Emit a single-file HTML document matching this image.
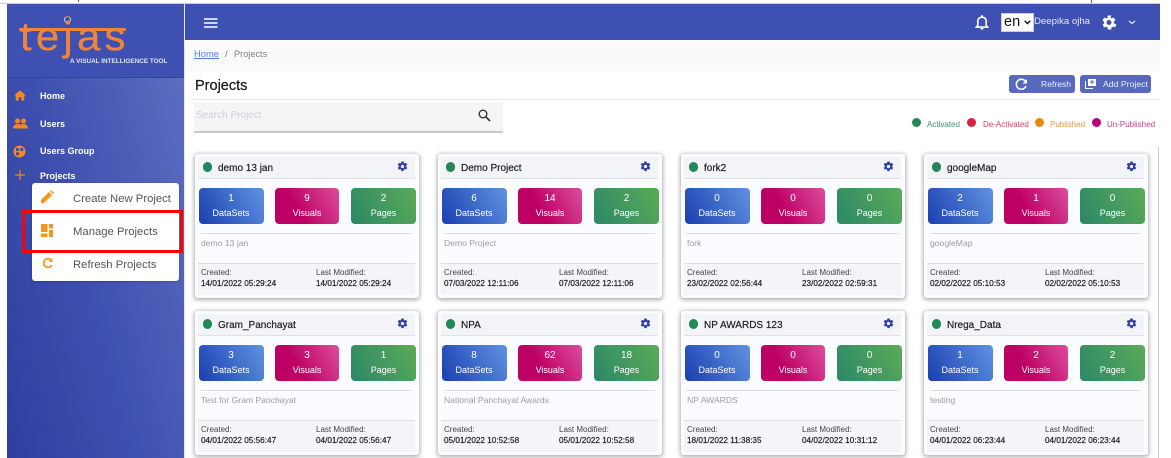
<!DOCTYPE html>
<html><head><meta charset="utf-8">
<style>
html,body{margin:0;padding:0;background:#fff;}
body{width:1171px;height:458px;position:relative;overflow:hidden;font-family:"Liberation Sans",sans-serif;filter:blur(.3px);}
div,span,a,svg{position:absolute;white-space:nowrap;}
.card{width:224px;height:144px;background:#fbfcff;border-radius:3px;box-shadow:0 1px 4px 1px rgba(0,0,0,.32);}
.hd{left:3px;top:3px;width:217px;height:21px;background:#f3f4f8;border-bottom:1px solid #dfe1e6;}
.dot{left:7.5px;top:8px;width:9.5px;height:9.5px;border-radius:50%;background:#23875a;}
.ttl{left:23px;top:8.7px;font-size:10px;line-height:12px;color:#222;-webkit-text-stroke:.2px #222;}
.gear{left:202px;top:7px;width:11px;height:11px;}
.t{top:34px;width:65px;height:36px;border-radius:4px;color:#fff;text-align:center;}
.t b{position:absolute;left:0;right:0;top:5px;font-weight:400;font-size:10px;line-height:12px;}
.t i{position:absolute;left:0;right:0;top:20px;font-style:normal;font-size:9px;line-height:11px;}
.t1{left:3.5px;background:linear-gradient(60deg,#1a3fb0,#6093e0);}
.t2{left:80px;width:64px;background:linear-gradient(60deg,#bd0064 35%,#dc4e9b);}
.t3{left:156px;background:linear-gradient(60deg,#2b8768,#5bab57);}
.ln{left:6px;top:79px;width:211px;height:1px;background:#dcdee3;}
.ds{left:6px;top:83.5px;font-size:8.6px;line-height:11px;color:#9a9da3;}
.ft{left:3px;top:109px;width:217px;height:31px;background:#f3f5f9;border-top:1px solid #dcdee3;}
.l{font-size:8px;line-height:10px;color:#444;top:4px;}
.v{font-size:8.2px;line-height:10px;color:#222;top:15px;-webkit-text-stroke:.2px #222;}
.a{left:3px}.b{left:118px}
.nav{left:40px;font-size:9px;line-height:11px;color:#fff;font-weight:bold;}
.mi{left:73px;font-size:11.3px;line-height:14px;color:#555;}
.lg{font-size:8px;line-height:10px;top:120px;}
.ld{width:9px;height:9px;border-radius:50%;top:118px;}
</style></head>
<body>
<div style="left:0;top:0;width:1160px;height:3px;background:#fff;border-bottom:1px solid #ccc;"></div>
<div style="left:78px;top:0;width:1px;height:2px;background:#666"></div>
<div style="left:1091px;top:0;width:1px;height:3px;background:#666"></div>

<!-- sidebar -->
<div style="left:7px;top:4px;width:177px;height:454px;background:linear-gradient(75deg,#2f3e9e 0%,#3f51b0 45%,#6170c2 100%);"></div>
<div style="left:7px;top:4px;width:177px;height:73px;background:#3e50b1;border-bottom:1px solid #34439b;"></div>
<div style="left:184px;top:4px;width:1px;height:454px;background:#e8e8e8"></div>

<!-- logo -->
<div style="left:19px;top:28px;width:107px;height:3px;background:#f0853a;border-radius:2px"></div>
<div style="left:64px;top:16px;width:5px;height:5px;border:1.5px solid #c9cfe6;border-top-color:#f0853a;border-radius:50%"></div>
<div style="left:20px;top:12px;font-size:40px;line-height:50px;letter-spacing:4px;color:#f0853a;-webkit-text-stroke:.3px #f0853a;transform:scaleX(1.05);transform-origin:left top;">tejas</div>
<div style="left:70px;top:56.5px;font-size:6.4px;line-height:9px;font-weight:bold;color:#dfe3f3;">A VISUAL INTELLIGENCE TOOL</div>

<!-- nav -->
<svg style="left:14px;top:90px" width="12" height="11" viewBox="0 0 14 12"><path d="M7 0L0 6h2v6h3.500V8h3v4H12V6h2z" fill="#f5891f"/></svg>
<div class="nav" style="top:91px">Home</div>
<svg style="left:13px;top:118px" width="15" height="11" viewBox="0 0 15 11"><circle cx="4.500" cy="3" r="2.500" fill="#f5891f"/><circle cx="10.500" cy="3" r="2.500" fill="#f5891f"/><path d="M0 10.500C0 7 3 6 4.500 6S7.500 6.500 7.500 7C8 6.500 9 6 10.500 6 12 6 15 7 15 10.500z" fill="#f5891f"/></svg>
<div class="nav" style="top:119px">Users</div>
<svg style="left:13px;top:145px" width="13" height="13" viewBox="0 0 13 13"><circle cx="6.500" cy="6.500" r="6" fill="#f5891f"/><rect x="3" y="3" width="2.800" height="2.800" fill="#3e4fa8"/><rect x="7.300" y="3" width="2.800" height="3" fill="#3e4fa8"/><rect x="3" y="7.300" width="3" height="3" fill="#3e4fa8"/></svg>
<div class="nav" style="top:146px">Users Group</div>
<svg style="left:15px;top:170px" width="10" height="10" viewBox="0 0 10 10"><path d="M5 0v10M0 5h10" stroke="#f5891f" stroke-width="1.200"/></svg>
<div class="nav" style="top:171px">Projects</div>

<!-- flyout -->
<div style="left:32px;top:183px;width:147px;height:98px;background:#fff;border-radius:3px;box-shadow:0 1px 2px rgba(0,0,0,.2)"></div>
<svg style="left:41px;top:190px" width="13" height="13" viewBox="0 0 13 13"><path d="M0 13V10L8 2l3 3-8 8zM9 1l1-1 3 3-1 1.200z" fill="#f5941f"/></svg>
<div class="mi" style="top:192px">Create New Project</div>
<svg style="left:41px;top:224px" width="12" height="13" viewBox="0 0 12 13"><path d="M0 0h6.500v8H0zM8 0h4v4.500H8zM8 6h4v7H8zM0 9.500h6.500V13H0z" fill="#f5941f"/></svg>
<div class="mi" style="top:225px">Manage Projects</div>
<svg style="left:42px;top:257px" width="11" height="12" viewBox="0 0 11 12"><path d="M9.500 3.500A4.300 4.300 0 1 0 9.800 8" fill="none" stroke="#f5941f" stroke-width="1.700"/><path d="M10.500 1v4h-4z" fill="#f5941f"/></svg>
<div class="mi" style="top:258px">Refresh Projects</div>
<div style="left:22px;top:210px;width:155px;height:37px;border:3px solid #f00"></div>

<!-- topbar -->
<div style="left:185px;top:4px;width:975px;height:36px;background:#3e50b1;"></div>
<svg style="left:204px;top:18px" width="14" height="10" viewBox="0 0 14 10"><path d="M0 1h13.500M0 5h13.500M0 9h13.500" stroke="#fff" stroke-width="1.400"/></svg>
<svg style="left:975px;top:14px" width="14" height="17" viewBox="0 0 12 15"><path d="M1 11.500h10L9.700 10V6.500C9.700 4 8.200 2.800 6 2.800S2.300 4 2.300 6.500V10zM4.800 13h2.400" fill="none" stroke="#fff" stroke-width="1.400"/><path d="M6 1v2" stroke="#fff" stroke-width="1.400"/></svg>
<div style="left:1001px;top:13px;width:33px;height:19px;background:#fff;border:.5px solid #ccc;box-sizing:border-box;"></div>
<div style="left:1004px;top:13px;font-size:14.5px;line-height:19px;color:#111;">en</div>
<svg style="left:1024px;top:20px" width="7" height="5" viewBox="0 0 7 5"><path d="M.7.7L3.500 3.500 6.300.7" fill="none" stroke="#111" stroke-width="1.400"/></svg>
<div style="left:1034px;top:16px;font-size:9.6px;line-height:12px;color:#e8eaf6;">Deepika ojha</div>
<svg style="left:1100px;top:14px" width="17" height="17" viewBox="0 0 24 24"><path fill="#fff" d="M19.400 13c0-.3.100-.6.100-1s0-.7-.1-1l2.100-1.600c.2-.2.200-.4.100-.6l-2-3.500c-.1-.2-.4-.3-.6-.2l-2.500 1c-.5-.4-1.100-.7-1.700-1L15.900 2.500c0-.2-.2-.4-.5-.4h-4c-.2 0-.5.200-.5.400l-.4 2.600c-.6.300-1.200.6-1.700 1l-2.500-1c-.2-.1-.5 0-.6.200l-2 3.500c-.1.200-.1.400.1.600L5.900 11c0 .3-.1.600-.1 1s0 .7.1 1l-2.100 1.600c-.2.200-.2.400-.1.600l2 3.500c.1.200.4.300.6.200l2.500-1c.5.400 1.100.7 1.700 1l.4 2.600c0 .2.200.4.500.4h4c.2 0 .5-.2.500-.4l.4-2.600c.6-.3 1.200-.6 1.700-1l2.500 1c.2.100.5 0 .6-.2l2-3.500c.1-.2.100-.4-.1-.6zM12.700 15.500a3.500 3.500 0 1 1 0-7 3.500 3.500 0 0 1 0 7z"/></svg>
<svg style="left:1128px;top:20px" width="8" height="5" viewBox="0 0 8 5"><path d="M1 1l3 2.500L7 1" fill="none" stroke="#e8eaf6" stroke-width="1.200"/></svg>

<!-- breadcrumb -->
<div style="left:185px;top:41px;width:975px;height:30px;background:#fafafa;"></div>
<a style="left:194px;top:48px;font-size:9.4px;line-height:12px;color:#5a78ee;text-decoration:underline;">Home</a>
<div style="left:225px;top:48px;font-size:9.4px;line-height:12px;color:#777;">/</div>
<div style="left:234px;top:48px;font-size:9.2px;line-height:12px;color:#80838c;">Projects</div>

<!-- title row -->
<div style="left:195px;top:77px;font-size:14.500px;line-height:18px;color:#1b1b1b;-webkit-text-stroke:.25px #1b1b1b;">Projects</div>
<div style="left:190px;top:99px;width:970px;height:1px;background:#e3e3e3"></div>
<div style="left:1009px;top:75px;width:66px;height:18px;background:#5669bf;border-radius:3px;"></div>
<svg style="left:1015px;top:78px" width="13" height="12" viewBox="0 0 13 12"><path d="M10.500 3.500A5 5 0 1 0 11 8" fill="none" stroke="#fff" stroke-width="1.500"/><path d="M12 1v4.500H7.500z" fill="#fff"/></svg>
<div style="left:1041px;top:79px;font-size:8.600px;line-height:11px;color:#eef0fa;">Refresh</div>
<div style="left:1080px;top:75px;width:71px;height:18px;background:#5669bf;border-radius:3px;"></div>
<svg style="left:1085px;top:78px" width="11" height="11" viewBox="0 0 11 11"><path d="M3 1h8v7H3zM6.500 2v1.500H5v1h1.500v1.700h1V4.500h1.800v-1H7.500V2zM0 3h1v7h7v1H0z" fill="#fff" fill-rule="evenodd"/></svg>
<div style="left:1103px;top:79px;font-size:8.700px;line-height:11px;color:#eef0fa;">Add Project</div>

<!-- search -->
<div style="left:194px;top:102px;width:309px;height:31px;background:#f5f5f5;border-bottom:2px solid #c8c8c8;box-sizing:border-box;border-radius:2px 2px 0 0"></div>
<div style="left:196px;top:109px;font-size:10px;line-height:13px;color:#ccd0e4;">Search Project</div>
<svg style="left:478px;top:109px" width="13" height="13" viewBox="0 0 13 13"><circle cx="5" cy="5" r="3.800" fill="none" stroke="#333" stroke-width="1.400"/><path d="M8 8l4 4" stroke="#333" stroke-width="1.600"/></svg>

<!-- legend -->
<div class="ld" style="left:912px;background:#23875a"></div><div class="lg" style="left:927px;color:#3f9272">Activated</div>
<div class="ld" style="left:967px;background:#dc1f45"></div><div class="lg" style="left:983px;color:#e0415f">De-Activated</div>
<div class="ld" style="left:1035px;background:#e8890f"></div><div class="lg" style="left:1050px;color:#ea9c3c">Published</div>
<div class="ld" style="left:1092px;background:#bd007c"></div><div class="lg" style="left:1107px;color:#c93a8e">Un-Published</div>

<div style="left:1158px;top:147px;width:1px;height:311px;background:#ccc"></div>

<!-- cards -->
<div class="card" style="left:195px;top:154px"><div class="hd"></div><div class="dot"></div><div class="ttl">demo 13 jan</div><svg class="gear" viewBox="0 0 24 24"><path fill="#3340a8" fill-rule="evenodd" d="M9.500 1h5l.6 3.200 1.800 1 3-1.100 2.500 4.300-2.500 2.100v2l2.500 2.100-2.500 4.300-3-1.100-1.800 1-.6 3.200h-5l-.6-3.200-1.800-1-3 1.100-2.500-4.300 2.500-2.100v-2L1.600 8.400l2.500-4.300 3 1.100 1.800-1zM12 8.500a3.500 3.500 0 1 0 0 7 3.500 3.500 0 0 0 0-7z"/></svg><div class="t t1"><b>1</b><i>DataSets</i></div><div class="t t2"><b>9</b><i>Visuals</i></div><div class="t t3"><b>2</b><i>Pages</i></div><div class="ln"></div><div class="ds">demo 13 jan</div><div class="ft"><div class="l a">Created:</div><div class="l b">Last Modified:</div><div class="v a">14/01/2022 05:29:24</div><div class="v b">14/01/2022 05:29:24</div></div></div>

<div class="card" style="left:438px;top:154px"><div class="hd"></div><div class="dot"></div><div class="ttl">Demo Project</div><svg class="gear" viewBox="0 0 24 24"><path fill="#3340a8" fill-rule="evenodd" d="M9.500 1h5l.6 3.200 1.800 1 3-1.100 2.500 4.300-2.500 2.100v2l2.500 2.100-2.500 4.300-3-1.100-1.800 1-.6 3.200h-5l-.6-3.200-1.800-1-3 1.100-2.500-4.300 2.500-2.100v-2L1.600 8.400l2.500-4.300 3 1.100 1.800-1zM12 8.500a3.500 3.500 0 1 0 0 7 3.500 3.500 0 0 0 0-7z"/></svg><div class="t t1"><b>6</b><i>DataSets</i></div><div class="t t2"><b>14</b><i>Visuals</i></div><div class="t t3"><b>2</b><i>Pages</i></div><div class="ln"></div><div class="ds">Demo Project</div><div class="ft"><div class="l a">Created:</div><div class="l b">Last Modified:</div><div class="v a">07/03/2022 12:11:06</div><div class="v b">07/03/2022 12:11:06</div></div></div>

<div class="card" style="left:681px;top:154px"><div class="hd"></div><div class="dot"></div><div class="ttl">fork2</div><svg class="gear" viewBox="0 0 24 24"><path fill="#3340a8" fill-rule="evenodd" d="M9.500 1h5l.6 3.200 1.800 1 3-1.100 2.500 4.300-2.500 2.100v2l2.500 2.100-2.500 4.300-3-1.100-1.800 1-.6 3.200h-5l-.6-3.200-1.800-1-3 1.100-2.500-4.300 2.500-2.100v-2L1.600 8.400l2.500-4.300 3 1.100 1.800-1zM12 8.500a3.500 3.500 0 1 0 0 7 3.500 3.500 0 0 0 0-7z"/></svg><div class="t t1"><b>0</b><i>DataSets</i></div><div class="t t2"><b>0</b><i>Visuals</i></div><div class="t t3"><b>0</b><i>Pages</i></div><div class="ln"></div><div class="ds">fork</div><div class="ft"><div class="l a">Created:</div><div class="l b">Last Modified:</div><div class="v a">23/02/2022 02:56:44</div><div class="v b">23/02/2022 02:59:31</div></div></div>

<div class="card" style="left:924px;top:154px"><div class="hd"></div><div class="dot"></div><div class="ttl">googleMap</div><svg class="gear" viewBox="0 0 24 24"><path fill="#3340a8" fill-rule="evenodd" d="M9.500 1h5l.6 3.200 1.800 1 3-1.100 2.500 4.300-2.500 2.100v2l2.500 2.100-2.500 4.300-3-1.100-1.800 1-.6 3.200h-5l-.6-3.200-1.800-1-3 1.100-2.500-4.300 2.500-2.100v-2L1.600 8.400l2.500-4.300 3 1.100 1.800-1zM12 8.500a3.500 3.500 0 1 0 0 7 3.500 3.500 0 0 0 0-7z"/></svg><div class="t t1"><b>2</b><i>DataSets</i></div><div class="t t2"><b>1</b><i>Visuals</i></div><div class="t t3"><b>0</b><i>Pages</i></div><div class="ln"></div><div class="ds">googleMap</div><div class="ft"><div class="l a">Created:</div><div class="l b">Last Modified:</div><div class="v a">02/02/2022 05:10:53</div><div class="v b">02/02/2022 05:10:53</div></div></div>

<div class="card" style="left:195px;top:311px"><div class="hd"></div><div class="dot"></div><div class="ttl">Gram_Panchayat</div><svg class="gear" viewBox="0 0 24 24"><path fill="#3340a8" fill-rule="evenodd" d="M9.500 1h5l.6 3.200 1.800 1 3-1.100 2.500 4.300-2.500 2.100v2l2.500 2.100-2.500 4.300-3-1.100-1.800 1-.6 3.200h-5l-.6-3.200-1.800-1-3 1.100-2.500-4.300 2.500-2.100v-2L1.600 8.400l2.500-4.300 3 1.100 1.800-1zM12 8.500a3.500 3.500 0 1 0 0 7 3.500 3.500 0 0 0 0-7z"/></svg><div class="t t1"><b>3</b><i>DataSets</i></div><div class="t t2"><b>3</b><i>Visuals</i></div><div class="t t3"><b>1</b><i>Pages</i></div><div class="ln"></div><div class="ds">Test for Gram Panchayat</div><div class="ft"><div class="l a">Created:</div><div class="l b">Last Modified:</div><div class="v a">04/01/2022 05:56:47</div><div class="v b">04/01/2022 05:56:47</div></div></div>

<div class="card" style="left:438px;top:311px"><div class="hd"></div><div class="dot"></div><div class="ttl">NPA</div><svg class="gear" viewBox="0 0 24 24"><path fill="#3340a8" fill-rule="evenodd" d="M9.500 1h5l.6 3.200 1.800 1 3-1.100 2.500 4.300-2.500 2.100v2l2.500 2.100-2.500 4.300-3-1.100-1.800 1-.6 3.200h-5l-.6-3.200-1.800-1-3 1.100-2.500-4.300 2.500-2.100v-2L1.600 8.400l2.500-4.300 3 1.100 1.800-1zM12 8.500a3.500 3.500 0 1 0 0 7 3.500 3.500 0 0 0 0-7z"/></svg><div class="t t1"><b>8</b><i>DataSets</i></div><div class="t t2"><b>62</b><i>Visuals</i></div><div class="t t3"><b>18</b><i>Pages</i></div><div class="ln"></div><div class="ds">National Panchayat Awards</div><div class="ft"><div class="l a">Created:</div><div class="l b">Last Modified:</div><div class="v a">05/01/2022 10:52:58</div><div class="v b">05/01/2022 10:52:58</div></div></div>

<div class="card" style="left:681px;top:311px"><div class="hd"></div><div class="dot"></div><div class="ttl">NP AWARDS 123</div><svg class="gear" viewBox="0 0 24 24"><path fill="#3340a8" fill-rule="evenodd" d="M9.500 1h5l.6 3.200 1.800 1 3-1.100 2.500 4.300-2.500 2.100v2l2.500 2.100-2.500 4.300-3-1.100-1.800 1-.6 3.200h-5l-.6-3.200-1.800-1-3 1.100-2.500-4.300 2.500-2.100v-2L1.600 8.400l2.500-4.300 3 1.100 1.800-1zM12 8.500a3.500 3.500 0 1 0 0 7 3.500 3.500 0 0 0 0-7z"/></svg><div class="t t1"><b>0</b><i>DataSets</i></div><div class="t t2"><b>0</b><i>Visuals</i></div><div class="t t3"><b>0</b><i>Pages</i></div><div class="ln"></div><div class="ds">NP AWARDS</div><div class="ft"><div class="l a">Created:</div><div class="l b">Last Modified:</div><div class="v a">18/01/2022 11:38:35</div><div class="v b">04/02/2022 10:31:12</div></div></div>

<div class="card" style="left:924px;top:311px"><div class="hd"></div><div class="dot"></div><div class="ttl">Nrega_Data</div><svg class="gear" viewBox="0 0 24 24"><path fill="#3340a8" fill-rule="evenodd" d="M9.500 1h5l.6 3.200 1.800 1 3-1.100 2.500 4.300-2.500 2.100v2l2.500 2.100-2.500 4.300-3-1.100-1.800 1-.6 3.200h-5l-.6-3.200-1.800-1-3 1.100-2.500-4.300 2.500-2.100v-2L1.600 8.400l2.500-4.300 3 1.100 1.800-1zM12 8.500a3.500 3.500 0 1 0 0 7 3.500 3.500 0 0 0 0-7z"/></svg><div class="t t1"><b>1</b><i>DataSets</i></div><div class="t t2"><b>2</b><i>Visuals</i></div><div class="t t3"><b>2</b><i>Pages</i></div><div class="ln"></div><div class="ds">testing</div><div class="ft"><div class="l a">Created:</div><div class="l b">Last Modified:</div><div class="v a">04/01/2022 06:23:44</div><div class="v b">04/01/2022 06:23:44</div></div></div>
</body></html>
